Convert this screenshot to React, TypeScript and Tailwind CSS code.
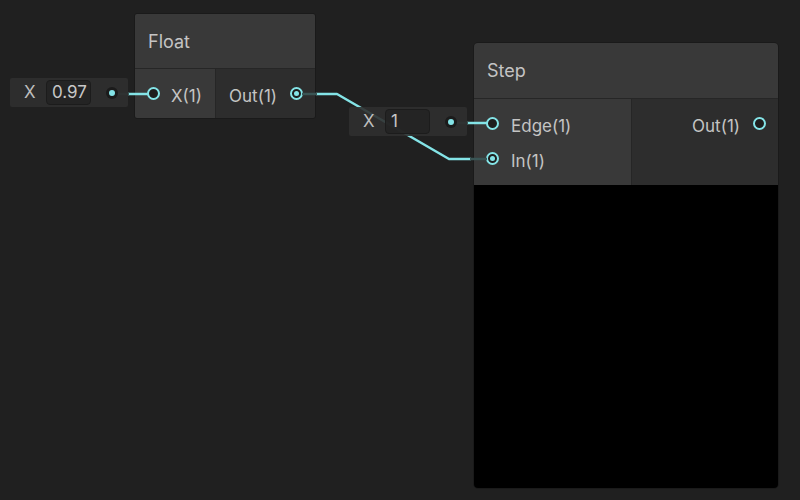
import React from 'react';

const font = { fontFamily: 'Inter, "Noto Sans", sans-serif' };

const Port: React.FC<{ dot?: boolean }> = ({ dot }) => (
  <div className="w-[13px] h-[13px] rounded-full border-2 border-[#84e4e7] bg-[#1e1e1e] flex items-center justify-center shrink-0">
    {dot && <div className="w-[5px] h-[5px] rounded-full bg-[#84e4e7]" />}
  </div>
);

const InlineField: React.FC<{ value: string; left: number; top: number }> = ({ value, left, top }) => (
  <div
    className="absolute h-[29px] w-[118px] bg-[#2f2f2f]/90 rounded-[2px] flex items-center pl-[14px] pr-[10px]"
    style={{ left, top }}
  >
    <span className="text-[#bdbdbd] text-[17px] w-[22px] pt-[1px]">X</span>
    <div className="w-[45px] h-[25px] rounded-[4px] bg-[#232323]/85 border border-[#1c1c1c] flex items-center px-[5px] pt-[1px] text-[#c8c8c8] text-[17px]">
      {value}
    </div>
    <div className="ml-auto w-[12px] h-[12px] rounded-full bg-[#1b1b1b] flex items-center justify-center">
      <div className="w-[6px] h-[6px] rounded-full bg-[#84e4e7]" />
    </div>
  </div>
);

const Wires = () => (
  <svg className="absolute inset-0" width="800" height="500" fill="none">
    <g stroke="#84e4e7" strokeWidth="2.5" strokeLinejoin="round">
      <path d="M316 94 L337 94 L449 159 L471 159" />
      <path d="M128 94 L148 94" />
      <path d="M467 123 L487 123" />
    </g>
    <g stroke="#3a5555" strokeWidth="2.5">
      <path d="M302 94 L317 94" />
      <path d="M470 159 L487 159" />
      <path d="M117 94 L129 94" />
      <path d="M456 123 L468 123" />
    </g>
  </svg>
);

export default function App() {
  return (
    <div className="relative w-[800px] h-[500px] bg-[#202020] overflow-hidden" style={font}>
      {/* Float node */}
      <div className="absolute left-[134px] top-[13px] w-[182px] border border-[#1a1a1a] rounded-[3px] overflow-hidden">
        <div className="h-[55px] bg-[#393939] flex items-center pl-[13px] text-[#c4c4c4] text-[18px] border-b border-[#262626]">
          Float
        </div>
        <div className="flex h-[49px]">
          <div className="w-[81px] bg-[#393939] flex items-center pl-[12px] gap-[11px] border-r border-[#262626]">
            <Port />
            <span className="text-[#c4c4c4] text-[17px] pt-[6px]">X(1)</span>
          </div>
          <div className="flex-1 bg-[#2d2d2d] flex items-center justify-end pr-[12px] gap-[13px]">
            <span className="text-[#c4c4c4] text-[17px] pt-[6px]">Out(1)</span>
            <Port dot />
          </div>
        </div>
      </div>

      {/* Step node */}
      <div className="absolute left-[473px] top-[42px] w-[306px] h-[447px] border border-[#1a1a1a] rounded-[5px] overflow-hidden flex flex-col">
        <div className="h-[56px] bg-[#393939] flex items-center pl-[13px] text-[#c4c4c4] text-[18px] border-b border-[#262626] shrink-0">
          Step
        </div>
        <div className="flex h-[86px] shrink-0">
          <div className="w-[158px] bg-[#393939] flex flex-col pt-[7px] pl-[12px] border-r border-[#262626]">
            <div className="h-[35px] flex items-center gap-[12px]">
              <Port />
              <span className="text-[#c4c4c4] text-[17px] pt-[6px]">Edge(1)</span>
            </div>
            <div className="h-[35px] flex items-center gap-[12px]">
              <Port dot />
              <span className="text-[#c4c4c4] text-[17px] pt-[6px]">In(1)</span>
            </div>
          </div>
          <div className="flex-1 bg-[#2d2d2d] flex flex-col pt-[7px] pr-[12px]">
            <div className="h-[35px] flex items-center justify-end gap-[13px]">
              <span className="text-[#c4c4c4] text-[17px] pt-[6px]">Out(1)</span>
              <Port />
            </div>
          </div>
        </div>
        <div className="flex-1 bg-black" />
      </div>

      <Wires />

      <InlineField value="0.97" left={10} top={78} />
      <InlineField value="1" left={349} top={107} />
    </div>
  );
}
